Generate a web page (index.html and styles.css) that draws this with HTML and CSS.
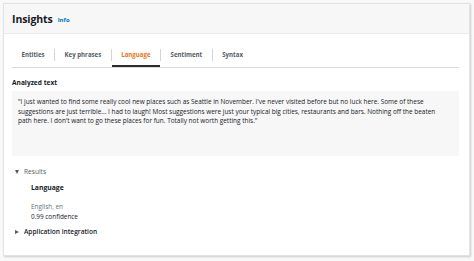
FILE: index.html
```html
<!DOCTYPE html>
<html>
<head>
<meta charset="utf-8">
<link rel="stylesheet" href="styles.css">
</head>
<body>
<div class="card">
  <div class="card-header">
    <span class="title">Insights</span>
    <a class="info">Info</a>
  </div>
  <div class="card-body">
    <div class="tabs">
      <div class="tab">Entities</div>
      <div class="sep"></div>
      <div class="tab">Key phrases</div>
      <div class="sep"></div>
      <div class="tab active">Language</div>
      <div class="sep"></div>
      <div class="tab">Sentiment</div>
      <div class="sep"></div>
      <div class="tab">Syntax</div>
    </div>
    <div class="label">Analyzed text</div>
    <div class="textbox">"I just wanted to find some really cool new places such as Seattle in November. I've never visited before but no luck here. Some of these suggestions are just terrible... I had to laugh! Most suggestions were just your typical big cities, restaurants and bars. Nothing off the beaten path here. I don't want to go these places for fun. Totally not worth getting this."</div>
    <div class="expander">
      <div class="exp-head"><span class="caret down"></span>Results</div>
      <div class="exp-content">
        <div class="res-title">Language</div>
        <div class="res-lang">English, en</div>
        <div class="res-conf">0.99 confidence</div>
      </div>
    </div>
    <div class="expander second">
      <div class="exp-head strong"><span class="caret right"></span>Application integration</div>
    </div>
  </div>
</div>
</body>
</html>
```
FILE: styles.css
```css
html, body {
  margin: 0;
  padding: 0;
}
body {
  background: #f9f9f9;
  font-family: "Open Sans", "Noto Sans", sans-serif;
  color: #16191f;
  width: 474px;
  height: 261px;
  overflow: hidden;
}
.card {
  margin: 3px 4px 0 3px;
  height: 253px;
  background: #fff;
  border: 1px solid #e3e3e3;
  box-shadow: 1px 1px 2px rgba(0,0,0,0.18);
  box-sizing: border-box;
}
.card-header {
  height: 29px;
  background: #f7f7f7;
  border-bottom: 1px solid #ebebeb;
  display: flex;
  align-items: center;
  padding-left: 8px;
}
.title {
  font-size: 10.5px;
  font-weight: 700;
  letter-spacing: -0.1px;
}
.info {
  font-size: 6px;
  font-weight: 700;
  color: #0073bb;
  margin-left: 5px;
  margin-top: 2px;
}
.card-body {
  padding: 0 10px 0 8px;
}
.tabs {
  display: flex;
  align-items: center;
  margin-top: 9px;
  border-bottom: 1px solid #dadada;
}
.tab {
  height: 24px;
  line-height: 24px;
  padding: 0 9.5px;
  font-size: 6.1px;
  font-weight: 700;
  color: #545b64;
  box-sizing: border-box;
}
.tab.active {
  color: #ec7211;
  border-bottom: 2px solid #2c2c2c;
  line-height: 24px;
}
.sep {
  width: 1px;
  height: 12px;
  background: #d5d5d5;
}
.label {
  font-size: 6.6px;
  font-weight: 700;
  margin-top: 10px;
  color: #16191f;
}
.textbox {
  margin-top: 4px;
  background: #f7f7f7;
  height: 65px;
  box-sizing: border-box;
  padding: 6px 14px 6px 6px;
  font-size: 6.45px;
  line-height: 9.6px;
  color: #16191f;
}
.expander {
  margin-top: 11px;
}
.expander.second {
  margin-top: 6px;
}
.exp-head {
  display: flex;
  align-items: center;
  font-size: 6.6px;
  color: #545b64;
  padding-left: 3px;
}
.exp-head.strong {
  color: #16191f;
  font-weight: 600;
}
.caret {
  width: 0;
  height: 0;
  margin-right: 5px;
}
.caret.down {
  border-left: 2.5px solid transparent;
  border-right: 2.5px solid transparent;
  border-top: 4px solid #545b64;
}
.caret.right {
  border-top: 2.5px solid transparent;
  border-bottom: 2.5px solid transparent;
  border-left: 4px solid #545b64;
}
.exp-content {
  padding-left: 19px;
  padding-top: 7px;
}
.res-title {
  font-size: 6.8px;
  font-weight: 700;
}
.res-lang {
  font-size: 6.4px;
  color: #687078;
  margin-top: 10px;
}
.res-conf {
  font-size: 6.4px;
  margin-top: 1px;
}
```
